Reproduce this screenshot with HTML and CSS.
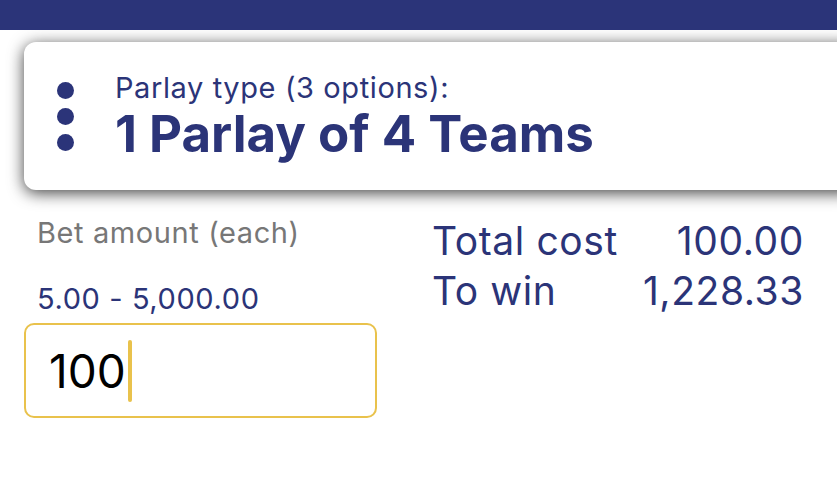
FILE: index.html
```html
<!DOCTYPE html>
<html lang="en">
<head>
<meta charset="UTF-8">
<meta name="viewport" content="width=device-width, initial-scale=1.0">
<title>Parlay</title>
<link rel="stylesheet" href="styles.css">
</head>
<body>
  <div class="topBar"></div>

  <div class="parlayCard">
    <div class="dots">
      <span></span>
      <span></span>
      <span></span>
    </div>
    <div class="parlayText">
      <div class="parlayLabel">Parlay type (3 options):</div>
      <div class="parlayTitle">1 Parlay of 4 Teams</div>
    </div>
  </div>

  <div class="betArea">
    <div class="betLeft">
      <div class="betLabel">Bet amount (each)</div>
      <div class="betRange">5.00 - 5,000.00</div>
      <div class="betInput">
        <span class="betValue">100</span><span class="caret"></span>
      </div>
    </div>
    <div class="betTotals">
      <div class="totalRow">
        <span>Total cost</span>
        <span>100.00</span>
      </div>
      <div class="totalRow">
        <span>To win</span>
        <span>1,228.33</span>
      </div>
    </div>
  </div>
</body>
</html>
```

FILE: styles.css
```css
body {
  margin: 0;
  padding: 0;
  background-color: #ffffff;
  font-family: Inter, "Noto Sans", sans-serif;
  color: #2b3478;
  overflow: hidden;
}

/* Navy strip along the top */
.topBar {
  height: 30px;
  background-color: #2b3479;
  position: relative;
  z-index: 2;
}

/* Parlay type card */
.parlayCard {
  display: flex;
  align-items: center;
  height: 148px;
  margin: 12px -20px 0 24px;
  background-color: #ffffff;
  border-radius: 12px;
  box-shadow: 0 3px 16px rgba(0, 0, 0, 0.75);
  position: relative;
  z-index: 1;
}

.dots {
  display: flex;
  flex-direction: column;
  gap: 9px;
  margin-left: 33px;
  width: 58px;
}

.dots span {
  width: 17px;
  height: 17px;
  border-radius: 50%;
  background-color: #2b3479;
}

.parlayText {
  margin-top: 2px;
}

.parlayLabel {
  font-size: 29px;
  line-height: 34px;
  letter-spacing: 0.6px;
}

.parlayTitle {
  font-size: 51px;
  font-weight: 700;
  line-height: 58px;
}

/* Bet amount and totals */
.betArea {
  display: flex;
  margin-top: 26px;
}

.betLeft {
  margin-left: 24px;
  width: 353px;
}

.betLabel {
  font-size: 29px;
  color: #777777;
  padding-left: 13px;
  line-height: 34px;
  letter-spacing: 0.6px;
}

.betRange {
  font-size: 29px;
  padding-left: 13px;
  margin-top: 32px;
  line-height: 34px;
  letter-spacing: 0.6px;
}

.betInput {
  display: flex;
  align-items: center;
  height: 91px;
  margin-top: 7px;
  border: 2px solid #e9c24c;
  border-radius: 10px;
  padding-left: 23px;
}

.betValue {
  font-size: 46px;
  color: #000000;
}

.caret {
  width: 4px;
  height: 62px;
  margin-left: 2px;
  background-color: #e9c24c;
  border-radius: 2px;
}

.betTotals {
  margin-left: 55px;
  width: 372px;
}

.totalRow {
  display: flex;
  justify-content: space-between;
  font-size: 39px;
  line-height: 50px;
  letter-spacing: 0.6px;
}
```
